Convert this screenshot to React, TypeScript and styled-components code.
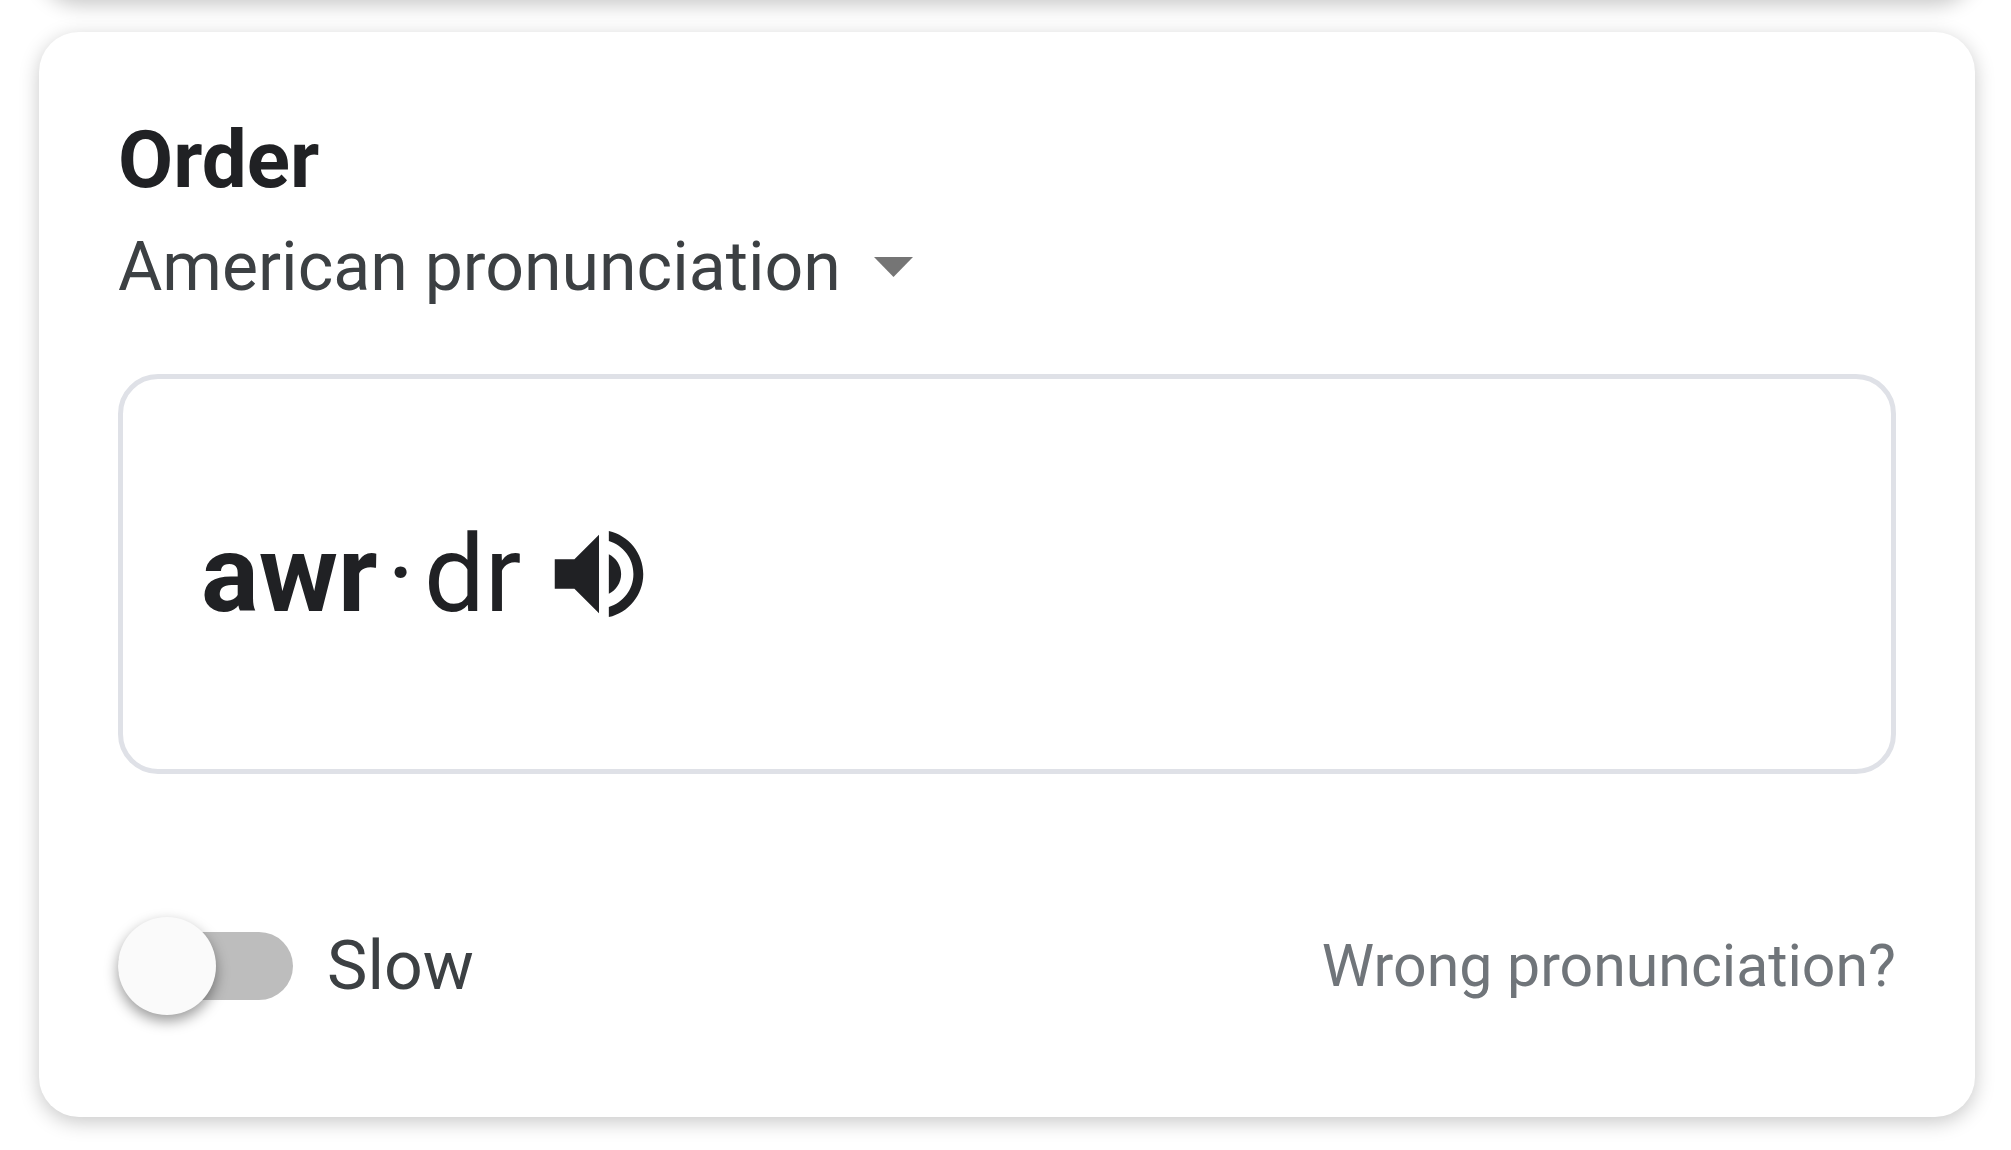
import React, { useState } from "react";
import styled, { createGlobalStyle } from "styled-components";

const GlobalStyle = createGlobalStyle`
  *, *::before, *::after { box-sizing: border-box; }
  body {
    margin: 0;
    background: #fff;
    color: #202124;
    font-family: Roboto, "Liberation Sans", sans-serif;
    overflow: hidden;
  }
`;

const Page = styled.main`
  display: flex;
  flex-direction: column;
  gap: 32px;
  padding: 0 36px 32px 39px;
`;

const Card = styled.section`
  padding: 82px 79px 99px;
  border-radius: 40px;
  background: #fff;
  box-shadow: 0 5px 20px rgba(0, 0, 0, 0.22);
`;

const PreviousCard = styled(Card)`
  margin-top: -181px;
`;

const Title = styled.h1`
  margin: 0;
  font-size: 80px;
  font-weight: 700;
  line-height: 92px;
`;

const AccentPicker = styled.div`
  display: inline-grid;
  align-items: center;
  margin-top: 15px;
  color: #3c4043;
`;

const AccentSelect = styled.select`
  grid-area: 1 / 1;
  appearance: none;
  field-sizing: content;
  height: 92px;
  margin: 0;
  padding: 0 72px 0 0;
  border: 0;
  background: transparent;
  color: inherit;
  font: 400 68px/92px Roboto, "Liberation Sans", sans-serif;
  cursor: pointer;
`;

const Caret = styled.svg`
  grid-area: 1 / 1;
  justify-self: end;
  width: 39px;
  height: 20px;
  fill: #757575;
  pointer-events: none;
`;

const Pronunciation = styled.div`
  display: flex;
  align-items: center;
  gap: 19px;
  height: 400px;
  margin-top: 61px;
  padding: 0 78px;
  border: 5px solid #dfe1e7;
  border-radius: 40px;
  font-size: 108px;
  line-height: 128px;
`;

const Syllables = styled.div`
  display: flex;
  gap: 9px;
`;

const ListenButton = styled.button`
  display: flex;
  padding: 0;
  border: 0;
  background: transparent;
  color: inherit;
  cursor: pointer;
`;

const SpeakerIcon = styled.svg`
  width: 118px;
  height: 118px;
  fill: currentColor;
`;

const Footer = styled.div`
  display: flex;
  align-items: center;
  justify-content: space-between;
  margin-top: 140px;
`;

const SlowLabel = styled.label`
  display: flex;
  align-items: center;
  gap: 34px;
  color: #3c4043;
  font-size: 68px;
  line-height: 104px;
  cursor: pointer;
`;

const Switch = styled.input`
  display: flex;
  align-items: center;
  appearance: none;
  width: 175px;
  height: 68px;
  margin: 0;
  border-radius: 34px;
  background: #bdbdbd;
  cursor: pointer;

  &::before {
    content: "";
    flex: none;
    width: 98px;
    height: 98px;
    border-radius: 50%;
    background: #fafafa;
    box-shadow: 0 6px 14px rgba(0, 0, 0, 0.4);
  }

  &:checked {
    justify-content: flex-end;
    background: #8ab4f8;
  }

  &:checked::before {
    background: #1a73e8;
  }
`;

const FeedbackLink = styled.a`
  color: #70757a;
  font-size: 59px;
  line-height: 104px;
  text-decoration: none;
`;

export default function App() {
  const [slow, setSlow] = useState(false);
  return (
    <>
      <GlobalStyle />
      <Page>
        <PreviousCard />
        <Card>
          <Title>Order</Title>
          <AccentPicker>
            <AccentSelect aria-label="Accent" defaultValue="us">
              <option value="us">American pronunciation</option>
            </AccentSelect>
            <Caret viewBox="0 0 39 20" aria-hidden="true">
              <path d="M0 0h39L19.500 20z" />
            </Caret>
          </AccentPicker>
          <Pronunciation>
            <Syllables>
              <b>awr</b>
              <span>·</span>
              <span>dr</span>
            </Syllables>
            <ListenButton aria-label="Listen">
              <SpeakerIcon viewBox="0 0 24 24" aria-hidden="true">
                <path d="M3 9v6h4l5 5V4L7 9H3zm13.5 3c0-1.77-1.02-3.29-2.5-4.03v8.05c1.48-.73 2.5-2.25 2.5-4.02zM14 3.23v2.06c2.89.86 5 3.54 5 6.71s-2.11 5.85-5 6.71v2.06c4.01-.91 7-4.49 7-8.77s-2.99-7.86-7-8.77z" />
              </SpeakerIcon>
            </ListenButton>
          </Pronunciation>
          <Footer>
            <SlowLabel>
              <Switch
                type="checkbox"
                role="switch"
                checked={slow}
                onChange={(event) => setSlow(event.target.checked)}
              />
              Slow
            </SlowLabel>
            <FeedbackLink href="#feedback">Wrong pronunciation?</FeedbackLink>
          </Footer>
        </Card>
      </Page>
    </>
  );
}
